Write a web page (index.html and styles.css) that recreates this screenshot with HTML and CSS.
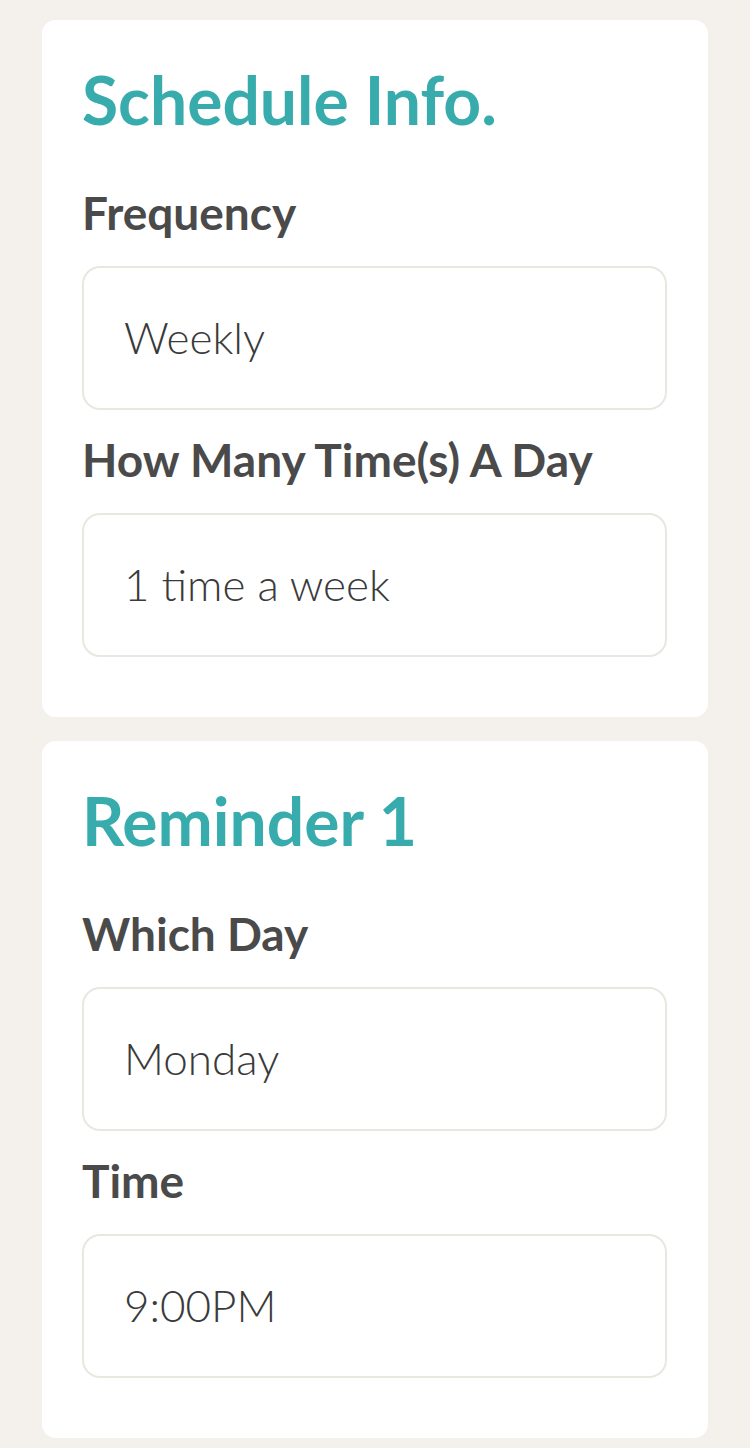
FILE: index.html
```html
<!DOCTYPE html>
<html lang="en">
<head>
<meta charset="utf-8">
<title>Schedule</title>
<link rel="stylesheet" href="styles.css">
</head>
<body>
<main class="page">
  <section class="card">
    <h2 class="card-title">Schedule Info.</h2>
    <div class="field">
      <div class="field-label">Frequency</div>
      <div class="field-input">Weekly</div>
    </div>
    <div class="field">
      <div class="field-label">How Many Time(s) A Day</div>
      <div class="field-input">1 time a week</div>
    </div>
  </section>
  <section class="card">
    <h2 class="card-title">Reminder 1</h2>
    <div class="field">
      <div class="field-label">Which Day</div>
      <div class="field-input">Monday</div>
    </div>
    <div class="field">
      <div class="field-label">Time</div>
      <div class="field-input">9:00PM</div>
    </div>
  </section>
</main>
</body>
</html>
```

FILE: styles.css
```css
html, body {
  margin: 0;
  padding: 0;
  background: #f4f1ec;
}

body {
  font-family: Lato, "Open Sans", sans-serif;
  color: #4a4a4a;
}

.page {
  display: flex;
  flex-direction: column;
  gap: 24px;
  padding: 20px 42px 10px 42px;
}

.card {
  background: #ffffff;
  border-radius: 14px;
  padding: 40px 41px 60px 40px;
  display: flex;
  flex-direction: column;
}

.card-title {
  margin: 0;
  font-size: 66px;
  line-height: 80px;
  font-weight: 700;
  color: #38acac;
}

.field {
  display: flex;
  flex-direction: column;
  gap: 25px;
  margin-top: 22px;
}

.card-title + .field {
  margin-top: 45px;
}

.field-label {
  font-size: 46px;
  line-height: 56px;
  font-weight: 700;
  color: #4a4a4a;
}

.field-input {
  box-sizing: border-box;
  height: 144px;
  border: 2px solid #e9e7df;
  border-radius: 18px;
  padding: 0 40px 3px 40px;
  display: flex;
  align-items: center;
  font-size: 44px;
  font-weight: 300;
  color: #3a3a3a;
}
```
